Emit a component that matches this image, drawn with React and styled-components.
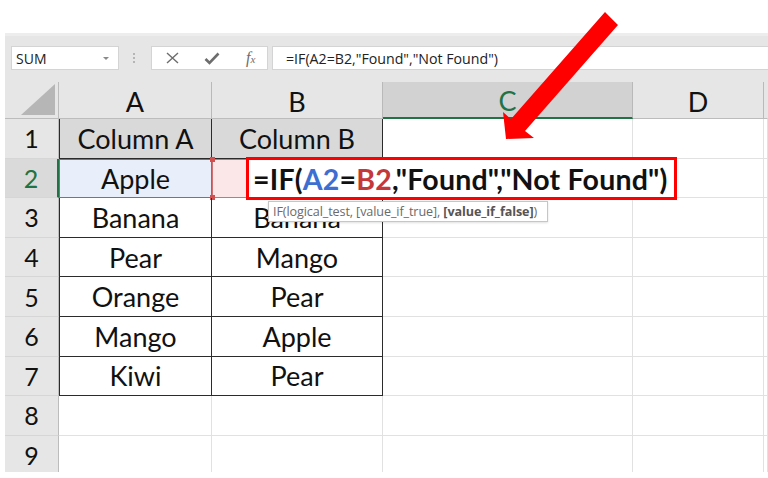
import React from 'react';
import styled, { createGlobalStyle, css } from 'styled-components';

const GlobalStyle = createGlobalStyle`
  html, body {
    margin: 0;
    padding: 0;
    background: #fff;
  }
  body {
    font-family: "Open Sans", "Noto Sans", sans-serif;
  }
`;

const columns = ['A', 'B', 'C', 'D', ''];

const rows = [
  ['Column A', 'Column B'],
  ['Apple', ''],
  ['Banana', 'Banana'],
  ['Pear', 'Mango'],
  ['Orange', 'Pear'],
  ['Mango', 'Apple'],
  ['Kiwi', 'Pear'],
  [],
  [],
];

const App = () => (
  <Page>
    <GlobalStyle />
    <Window>
      <FormulaBar>
        <NameBox>
          SUM
          <Caret />
        </NameBox>
        <Grip />
        <ButtonGroup>
          <IconButton>
            <svg width="13" height="12" viewBox="0 0 13 12">
              <path d="M1 1 L12 11 M12 1 L1 11" stroke="#6d6d6d" strokeWidth="1.4" fill="none" />
            </svg>
          </IconButton>
          <IconButton>
            <svg width="16" height="13" viewBox="0 0 16 13">
              <path d="M1.5 7 L5.5 11 L14.5 1.5" stroke="#6d6d6d" strokeWidth="2.6" fill="none" />
            </svg>
          </IconButton>
          <FxLabel>
            f<small>x</small>
          </FxLabel>
        </ButtonGroup>
        <FormulaInput>=IF(A2=B2,"Found","Not Found")</FormulaInput>
      </FormulaBar>

      <Sheet>
        <Corner>
          <CornerTriangle />
        </Corner>
        {columns.map((col, i) => (
          <ColumnHeader key={`h${i}`} $active={col === 'C'} $last={i === columns.length - 1}>
            {col}
          </ColumnHeader>
        ))}

        {rows.map((row, r) => (
          <React.Fragment key={`r${r}`}>
            <RowHeader $active={r === 1}>{r + 1}</RowHeader>
            {columns.map((_, c) => {
              const inData = r < 7 && c < 2;
              return (
                <Cell
                  key={`c${r}-${c}`}
                  $boxed={inData}
                  $first={inData && c === 0}
                  $fill={inData && r === 0}
                  $range={r === 1 && c === 0 ? 'blue' : r === 1 && c === 1 ? 'red' : null}
                >
                  {inData ? row[c] : ''}
                  {r === 1 && c === 1 && (
                    <>
                      <Handle style={{ left: -3, top: -3 }} />
                      <Handle style={{ left: -3, bottom: -3 }} />
                    </>
                  )}
                </Cell>
              );
            })}
          </React.Fragment>
        ))}

        <FormulaOverlay>
          =IF(<Ref $color="#3d6fd2">A2</Ref>=<Ref $color="#c4383c">B2</Ref>,"Found","Not Found")
        </FormulaOverlay>
        <Tooltip>
          IF(logical_test, [value_if_true], <b>[value_if_false]</b>)
        </Tooltip>
      </Sheet>
    </Window>

    <Arrow viewBox="0 0 768 478" width="768" height="478">
      <polygon
        points="605,12 618,25 525,131 534,138 506,139 503,112 511,119"
        fill="#ff0000"
      />
    </Arrow>
  </Page>
);

export default App;

const Page = styled.div`
  position: relative;
  width: 768px;
  height: 478px;
  padding: 33px 0 0 5px;
  box-sizing: border-box;
  overflow: hidden;
`;

const Window = styled.div`
  background: #e6e6e6;
  border-top: 3px solid #ededed;
  height: 436px;
`;

const FormulaBar = styled.div`
  height: 46px;
  box-sizing: border-box;
  padding: 10px 0 12px 6px;
  display: flex;
  align-items: stretch;
`;

const BarBox = styled.div`
  background: #fff;
  border: 1px solid #d4d4d4;
  box-sizing: border-box;
  display: flex;
  align-items: center;
`;

const NameBox = styled(BarBox)`
  width: 108px;
  padding-left: 4px;
  font-size: 14px;
  color: #222;
  position: relative;
`;

const Caret = styled.span`
  position: absolute;
  right: 9px;
  top: 10px;
  width: 0;
  height: 0;
  border-left: 3px solid transparent;
  border-right: 3px solid transparent;
  border-top: 3px solid #8a8a8a;
`;

const Grip = styled.div`
  width: 2px;
  margin: 6px 16px 6px 14px;
  background-image: radial-gradient(circle, #b5b5b5 1px, transparent 1.2px);
  background-size: 2px 4px;
`;

const ButtonGroup = styled(BarBox)`
  width: 117px;
  padding-left: 12px;
  gap: 24px;
`;

const IconButton = styled.span`
  display: flex;
  align-items: center;
  justify-content: center;
  width: 16px;
`;

const FxLabel = styled.span`
  font-family: "Liberation Serif", "DejaVu Serif", serif;
  font-style: italic;
  font-size: 16px;
  color: #6d6d6d;
  margin-left: 2px;
  small {
    font-size: 11px;
  }
`;

const FormulaInput = styled(BarBox)`
  flex: 1;
  margin-left: 4px;
  border-right: none;
  padding-left: 13px;
  font-size: 14.2px;
  color: #222;
  white-space: nowrap;
`;

const Sheet = styled.div`
  position: relative;
  display: grid;
  grid-template-columns: 54px 153px 171px 250px 131px 1fr;
  grid-template-rows: 37px repeat(9, 39.6px);
  height: 390px;
  overflow: hidden;
  background: #fff;
  font-family: Lato, "Open Sans", sans-serif;
  color: #111;
`;

const Corner = styled.div`
  background: #e6e6e6;
  border-right: 1px solid #bcbcbc;
  border-bottom: 1px solid #bcbcbc;
  position: relative;
`;

const CornerTriangle = styled.div`
  position: absolute;
  right: 3px;
  bottom: 3px;
  width: 34px;
  height: 31px;
  background: #b6b6b6;
  clip-path: polygon(100% 0, 100% 100%, 0 100%);
`;

const ColumnHeader = styled.div`
  background: #e6e6e6;
  border-right: 1px solid ${p => (p.$last ? 'transparent' : '#b9b9b9')};
  border-bottom: 1px solid #bcbcbc;
  display: flex;
  align-items: center;
  justify-content: center;
  font-size: 27px;
  padding-top: 2px;
  ${p =>
    p.$active &&
    css`
      background: #d2d2d2;
      color: #217346;
      border-bottom: 2px solid #217346;
    `}
`;

const RowHeader = styled.div`
  background: #e6e6e6;
  border-right: 1px solid #bcbcbc;
  border-bottom: 1px solid #d6d6d6;
  display: flex;
  align-items: center;
  justify-content: center;
  font-size: 25px;
  ${p =>
    p.$active &&
    css`
      background: #dadada;
      color: #217346;
      border-right: 2px solid #217346;
    `}
`;

const Cell = styled.div`
  position: relative;
  box-sizing: border-box;
  display: flex;
  align-items: center;
  justify-content: center;
  font-size: 27px;
  border-right: 1px solid #e1e1e1;
  border-bottom: 1px solid #e1e1e1;
  ${p =>
    p.$boxed &&
    css`
      border-right-color: #2b2b2b;
      border-bottom-color: #2b2b2b;
    `}
  ${p => p.$first && css`border-left: 1px solid #2b2b2b;`}
  ${p => p.$fill && css`background: #d9d9d9;`}
  ${p =>
    p.$range === 'blue' &&
    css`
      background: #e8effa;
      border: 1px solid #4a7bd0;
    `}
  ${p =>
    p.$range === 'red' &&
    css`
      background: #fbe7e7;
      border: 1px solid #d57070;
    `}
`;

const Handle = styled.span`
  position: absolute;
  width: 5px;
  height: 5px;
  background: #d05050;
`;

const FormulaOverlay = styled.div`
  position: absolute;
  left: 241px;
  top: 75px;
  width: 431px;
  height: 43px;
  box-sizing: border-box;
  border: 3.5px solid #ff0000;
  background: #fff;
  display: flex;
  align-items: center;
  padding-left: 4px;
  font-size: 28.5px;
  letter-spacing: 0.2px;
  font-weight: 700;
  color: #111;
  white-space: nowrap;
`;

const Ref = styled.span`
  color: ${p => p.$color};
`;

const Tooltip = styled.div`
  position: absolute;
  left: 263px;
  top: 119px;
  width: 280px;
  height: 21px;
  box-sizing: border-box;
  background: #fff;
  border: 1px solid #c6c6c6;
  box-shadow: 0 1px 2px rgba(0, 0, 0, 0.12);
  font-family: "Open Sans", sans-serif;
  font-size: 12.6px;
  letter-spacing: -0.1px;
  line-height: 19px;
  color: #6a6a6a;
  padding-left: 4px;
  white-space: nowrap;
  b {
    color: #555;
  }
`;

const Arrow = styled.svg`
  position: absolute;
  left: 0;
  top: 0;
  pointer-events: none;
`;
